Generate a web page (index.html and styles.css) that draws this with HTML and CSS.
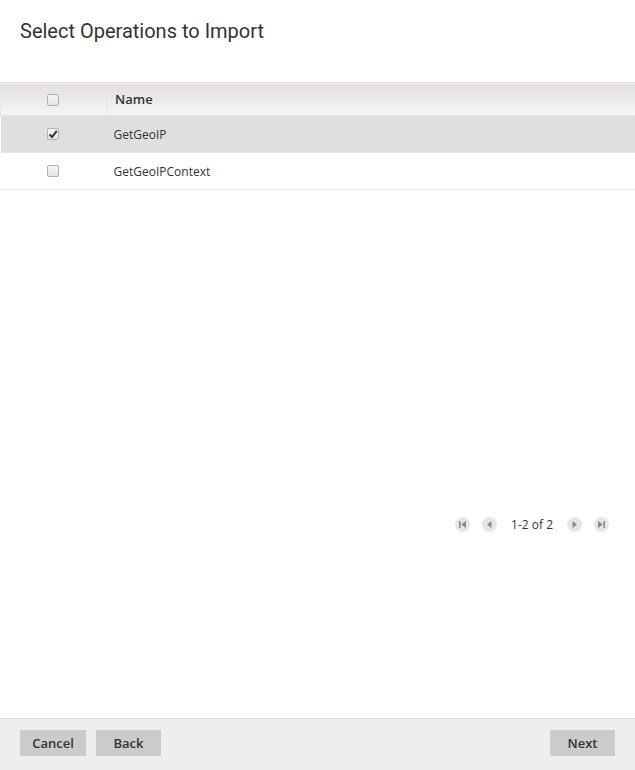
FILE: index.html
```html
<!DOCTYPE html>
<html lang="en">
<head>
  <meta charset="UTF-8" />
  <title>Select Operations to Import</title>
  <link rel="stylesheet" href="styles.css">
</head>
<body>

  <div class="dialog">
    <h1 class="title">Select Operations to Import</h1>

    <div class="content">
      <table class="grid">
        <thead>
          <tr>
            <th class="check-col"><span class="checkbox"></span></th>
            <th>Name</th>
          </tr>
        </thead>
        <tbody>
          <tr class="selected">
            <td class="check-col"><span class="checkbox checked">
              <svg width="10" height="10" viewBox="0 0 10 10"><path d="M1.5 5.5 L4 8 L8.8 1.8" fill="none" stroke="#333" stroke-width="2"/></svg>
            </span></td>
            <td>GetGeoIP</td>
          </tr>
          <tr>
            <td class="check-col"><span class="checkbox"></span></td>
            <td>GetGeoIPContext</td>
          </tr>
        </tbody>
      </table>

      <div class="pager">
        <span class="pager-btn">
          <svg width="9" height="9" viewBox="0 0 9 9"><rect x="1" y="1" width="1.6" height="7" fill="#8a8a8a"/><path d="M8 1 L3 4.5 L8 8 Z" fill="#8a8a8a"/></svg>
        </span>
        <span class="pager-btn">
          <svg width="9" height="9" viewBox="0 0 9 9"><path d="M6.5 1 L2 4.5 L6.5 8 Z" fill="#8a8a8a"/></svg>
        </span>
        <span class="pager-info">1-2 of 2</span>
        <span class="pager-btn">
          <svg width="9" height="9" viewBox="0 0 9 9"><path d="M2.5 1 L7 4.5 L2.5 8 Z" fill="#8a8a8a"/></svg>
        </span>
        <span class="pager-btn">
          <svg width="9" height="9" viewBox="0 0 9 9"><path d="M1 1 L6 4.5 L1 8 Z" fill="#8a8a8a"/><rect x="6.4" y="1" width="1.6" height="7" fill="#8a8a8a"/></svg>
        </span>
      </div>
    </div>

    <div class="footer">
      <button class="button">Cancel</button>
      <button class="button">Back</button>
      <span class="spacer"></span>
      <button class="button">Next</button>
    </div>
  </div>

</body>
</html>
```

FILE: styles.css
```css
body {
  margin: 0;
  background: #fff;
  font-family: "Open Sans", Arial, sans-serif;
  color: #333;
}
.dialog {
  width: 635px;
  height: 770px;
  display: flex;
  flex-direction: column;
}
.title {
  font-family: Roboto, Arial, sans-serif;
  font-weight: 400;
  font-size: 20px;
  color: #333;
  margin: 0;
  padding: 19px 20px 0 20px;
  height: 82px;
  box-sizing: border-box;
}
.content {
  flex: 1;
}
.grid {
  width: 100%;
  border-collapse: collapse;
  font-size: 12px;
}
.grid thead tr {
  background: linear-gradient(#e2dfde, #f6f6f6);
  border-top: 1px solid #dcd8d7;
}
.grid th {
  height: 32px;
  text-align: left;
  font-weight: 600;
  font-size: 13px;
  padding: 0 0 0 8px;
  border-left: 1px solid #e4e4e4;
}
.grid th.check-col {
  border-left: 1px solid #e8e8e8;
}
.grid td {
  height: 36px;
  padding: 0 0 0 7px;
  border-top: 1px solid #e6e6e6;
}
.grid tbody tr:last-child td {
  border-bottom: 1px solid #e6e6e6;
}
.grid .check-col {
  width: 105px;
  padding: 0;
  text-align: center;
}
.grid tr.selected {
  background: #dfdfdf;
}
.checkbox {
  display: inline-block;
  width: 10px;
  height: 10px;
  border: 1px solid #b0b0b0;
  border-radius: 2px;
  background: linear-gradient(#f4f4f4, #e6e6e6);
  vertical-align: middle;
  position: relative;
  top: -1px;
  left: -1px;
}
.checkbox svg {
  position: absolute;
  left: 0;
  top: 0;
}
.pager {
  display: flex;
  justify-content: flex-end;
  align-items: center;
  gap: 12px;
  margin-top: 325px;
  padding-right: 26px;
  font-size: 12px;
  color: #333;
}
.pager-btn {
  width: 15px;
  height: 15px;
  border-radius: 50%;
  background: #e6e6e6;
  display: flex;
  align-items: center;
  justify-content: center;
}
.pager-info {
  margin: 0 2px;
  padding-top: 1px;
}
.footer {
  height: 52px;
  box-sizing: border-box;
  background: #eeeeee;
  border-top: 1px solid #dcdcdc;
  display: flex;
  align-items: flex-start;
  padding: 11px 20px 0 20px;
  gap: 10px;
}
.spacer {
  flex: 1;
}
.button {
  background: #cbcbcb;
  border: none;
  height: 26px;
  min-width: 65px;
  padding: 0 10px;
  font-family: "Open Sans", Arial, sans-serif;
  font-size: 13px;
  font-weight: 600;
  color: #333;
  cursor: pointer;
}
.button:first-child {
  min-width: 66px;
}
```
